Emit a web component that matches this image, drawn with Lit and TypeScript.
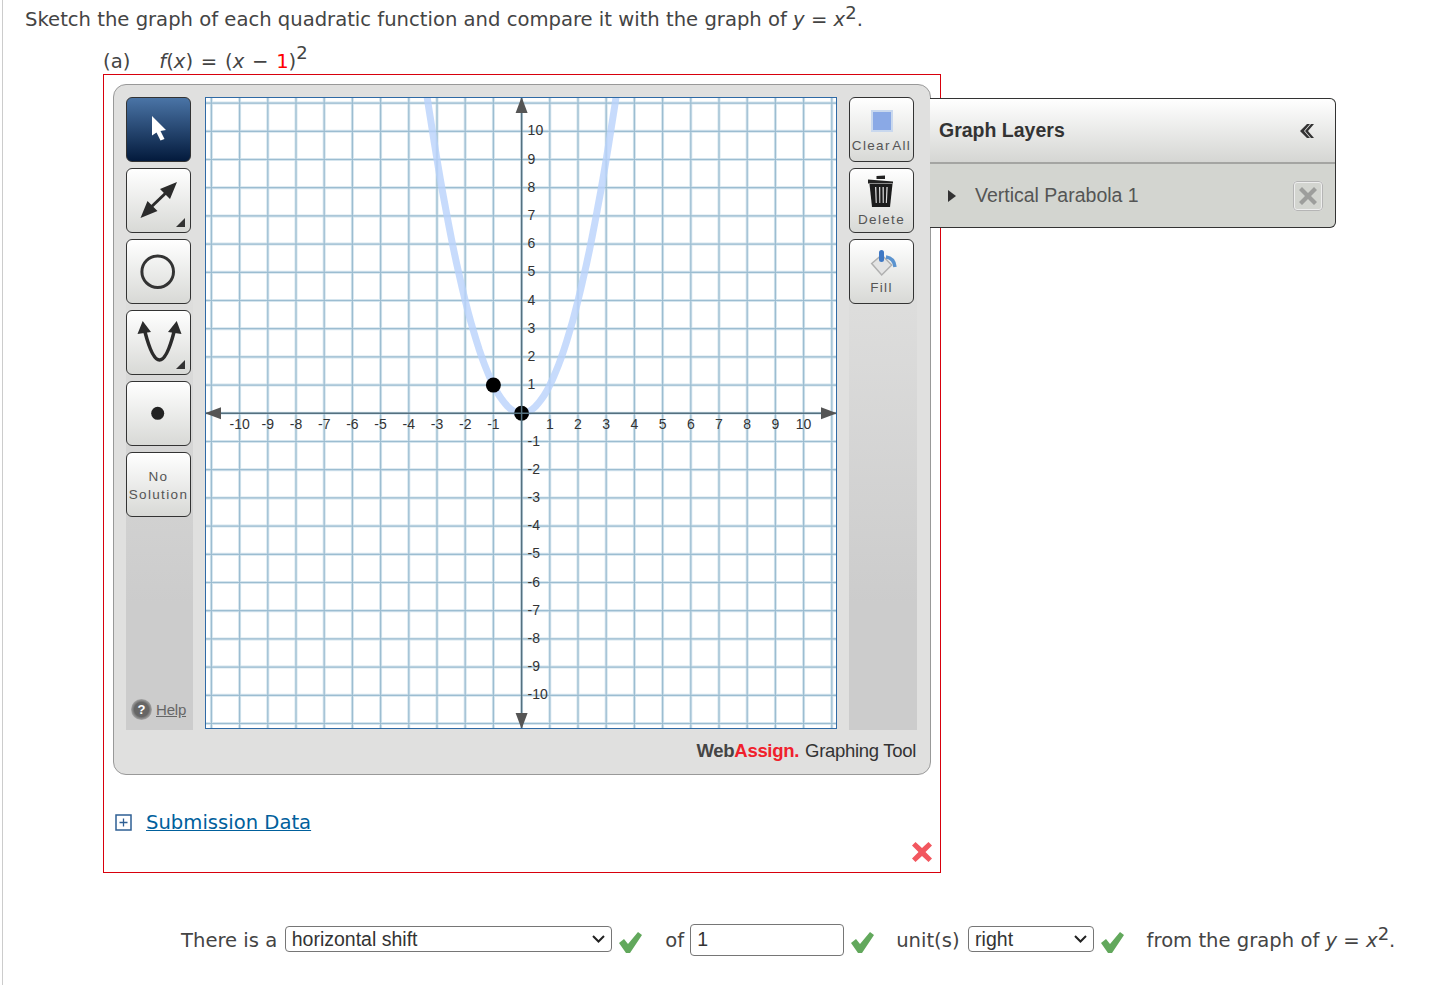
import { LitElement, css, html, svg } from "lit";
import { customElement } from "lit/decorators.js";

// graph coords: origin inside the 632 canvas, one unit is 28.2px
const UNIT = 28.2;
const CX = 316.6;
const CY = 316.3;
const TICKS = [-11, -10, -9, -8, -7, -6, -5, -4, -3, -2, -1, 0, 1, 2, 3, 4, 5, 6, 7, 8, 9, 10, 11];
const LABELS = TICKS.filter((t) => t !== 0 && Math.abs(t) <= 10);
const px = (t: number) => CX + t * UNIT;
const py = (t: number) => CY - t * UNIT;

const arrowMark = svg`<path d="M59 50v9h-9z" fill="#333" />`;

function parabolaPath() {
  const pts: string[] = [];
  for (let x = -3.6; x <= 3.6; x += 0.1) {
    pts.push(`${px(x).toFixed(1)},${py(x * x).toFixed(1)}`);
  }
  return pts.join(" ");
}

const TOOLS = [
  {
    active: true,
    icon: svg`<path d="M26 19 40 33 34.500 34 38.500 42 34.500 43.500 30.500 35.500 26 38.500z" fill="#fff" />`,
  },
  {
    icon: svg`<path d="M21 43 45 20" stroke="#2b2b2b" stroke-width="3" />
      <path d="M51 14 34 21 44 31zM14.500 50 31.500 43 21.500 33z" fill="#2b2b2b" />${arrowMark}`,
  },
  { icon: svg`<circle cx="31.700" cy="32.700" r="15.800" fill="none" stroke="#333" stroke-width="3" />` },
  {
    icon: svg`<path d="M19 22Q33.500 78 48 22" fill="none" stroke="#2b2b2b" stroke-width="3.500" />
      <path d="M16.700 11 11.500 24 25 22zM50.700 11 55.500 24 42 22z" fill="#2b2b2b" />${arrowMark}`,
  },
  { icon: svg`<circle cx="31.700" cy="32.300" r="6.500" fill="#222" />` },
];

@customElement("app-root")
export class AppRoot extends LitElement {
  static styles = css`
    :host {
      display: block;
      font-family: "DejaVu Sans", sans-serif;
      font-size: 19.600px;
      color: #444;
    }
    .page {
      margin-left: 2px;
      border-left: 1px solid #ccc;
      padding-left: 22px;
      height: 985px;
      box-sizing: border-box;
      overflow: hidden;
    }
    i {
      font-style: italic;
    }
    sup {
      font-size: 18px;
      line-height: 0;
      vertical-align: 7px;
    }
    .intro {
      height: 43px;
      line-height: 39px;
      white-space: nowrap;
    }
    .part {
      height: 31px;
      line-height: 38px;
      margin-left: 78px;
      display: flex;
      gap: 29px;
    }
    .formula {
      word-spacing: 1.500px;
    }
    .formula sup {
      vertical-align: 9px;
    }
    .red {
      color: #f00;
    }
    .question {
      position: relative;
      margin-left: 78px;
      width: 838px;
      height: 799px;
      box-sizing: border-box;
      border: 1px solid #d8000c;
      padding: 9px;
      display: flex;
      flex-direction: column;
    }
    .tool {
      position: relative;
      width: 818px;
      height: 691px;
      box-sizing: border-box;
      border: 1px solid #999;
      border-radius: 13px;
      background: #e0e0df;
      padding: 12px 13px 0 12px;
      flex: none;
    }
    .columns {
      display: flex;
      gap: 12px;
      height: 633px;
    }
    .bar {
      width: 67px;
      flex: none;
      display: flex;
      flex-direction: column;
      gap: 6px;
      background: linear-gradient(#e0e0df 25%, #cccccc 80%);
    }
    .bar.right {
      width: 68px;
    }
    .btn {
      width: 65px;
      height: 65px;
      box-sizing: border-box;
      border: 1px solid #333;
      border-radius: 6px;
      background: linear-gradient(#ffffff, #d8d9d6);
      display: flex;
      flex-direction: column;
      align-items: center;
      flex: none;
      position: relative;
      font-family: "Liberation Sans", sans-serif;
      font-size: 13.500px;
      letter-spacing: 1.350px;
      word-spacing: -3px;
      color: #555;
    }
    .btn.on {
      background: linear-gradient(#4a74a6, #031a3c);
    }
    .btn svg {
      position: absolute;
      left: -1px;
      top: -1px;
    }
    .btn .cap {
      position: absolute;
      left: 0;
      right: 0;
      text-align: center;
      white-space: nowrap;
    }
    .nosol {
      justify-content: center;
      line-height: 18px;
      text-align: center;
      padding-top: 2px;
    }
    .help {
      margin-top: auto;
      margin-bottom: 10px;
      padding-left: 5px;
      display: flex;
      align-items: center;
      gap: 4px;
      font-family: "Liberation Sans", sans-serif;
      font-size: 15px;
      color: #666;
    }
    .help u {
      letter-spacing: -0.200px;
    }
    .qmark {
      width: 21px;
      height: 21px;
      border-radius: 50%;
      background: radial-gradient(circle, #666 48%, #bbb 78%, #888 100%);
      color: #fff;
      font-weight: bold;
      font-size: 13px;
      line-height: 21px;
      text-align: center;
    }
    .canvas {
      width: 632px;
      height: 632px;
      flex: none;
      background: #fff;
      display: block;
    }
    .canvas text {
      font-family: "Liberation Sans", sans-serif;
      font-size: 14px;
      fill: #333;
    }
    .brand {
      height: 42px;
      display: flex;
      align-items: center;
      justify-content: flex-end;
      font-family: "Liberation Sans", sans-serif;
      font-size: 18.500px;
      color: #333;
      white-space: nowrap;
      padding-right: 1px;
      letter-spacing: -0.300px;
    }
    .brand b {
      color: #444;
    }
    .brand b span {
      color: #f0202c;
    }
    .brand em {
      font-style: normal;
      margin-left: 6px;
    }
    .layers {
      position: absolute;
      left: 100%;
      top: 13px;
      width: 406px;
      height: 130px;
      box-sizing: border-box;
      border: 1px solid #333;
      border-left: none;
      border-radius: 0 6px 6px 0;
      background: #d3d5d0;
      font-family: "Liberation Sans", sans-serif;
      display: flex;
      flex-direction: column;
    }
    .layers header {
      height: 65px;
      flex: none;
      box-sizing: border-box;
      border-bottom: 2px solid #a4a5a2;
      border-radius: 0 6px 0 0;
      background: linear-gradient(#ffffff, #d5d6d3);
      display: flex;
      align-items: center;
      justify-content: space-between;
      padding: 0 21px 0 9px;
      font-size: 19.500px;
      font-weight: bold;
      color: #333;
    }
    .layer {
      flex: 1;
      display: flex;
      align-items: center;
      padding: 0 12px 0 18px;
      color: #555;
      font-size: 19.500px;
    }
    .layer span {
      margin-left: 19px;
      flex: 1;
    }
    .close {
      width: 30px;
      height: 30px;
      box-sizing: border-box;
      border: 2px solid #eee;
      outline: 1px solid #b5b5b5;
      outline-offset: -1px;
      border-radius: 4px;
      display: flex;
      align-items: center;
      justify-content: center;
    }
    .submission {
      margin: 33px 0 0 2px;
      display: flex;
      align-items: center;
      gap: 14px;
      height: 28px;
    }
    .submission a {
      color: #00609c;
      text-decoration: underline;
    }
    .wrong {
      align-self: flex-end;
      margin: 6px -1px 0 0;
    }
    .answer {
      margin: 51px 0 0 156px;
      display: flex;
      align-items: center;
      height: 32px;
      white-space: nowrap;
    }
    select {
      appearance: none;
      height: 26px;
      box-sizing: border-box;
      border: 1px solid #767676;
      border-radius: 4px;
      background: #fff
        url("data:image/svg+xml,%3Csvg xmlns='http://www.w3.org/2000/svg' width='13' height='8'%3E%3Cpath d='M1 1l5.500 5.500L12 1' fill='none' stroke='%23222' stroke-width='2'/%3E%3C/svg%3E")
        no-repeat right 6px center;
      font-family: "Liberation Sans", sans-serif;
      font-size: 19.500px;
      color: #333;
      padding: 0 0 0 6px;
      margin: 0 0 2px 0;
    }
    input {
      width: 154px;
      height: 32px;
      box-sizing: border-box;
      border: 1px solid #767676;
      border-radius: 4px;
      font-family: "Liberation Sans", sans-serif;
      font-size: 19.500px;
      color: #333;
      padding: 0 6px 2px;
      margin: 0;
    }
    .shift {
      width: 327px;
      margin-left: 7.500px;
    }
    .dir {
      width: 126px;
      margin-left: 8.500px;
    }
    .check {
      flex: none;
      margin: 4px 0 0 7px;
    }
    .of {
      margin: 0 6px 0 23.500px;
    }
    .units {
      margin-left: 22px;
    }
    .tail {
      margin-left: 22.500px;
    }
  `;

  private check() {
    return html`<svg class="check" width="23" height="21" viewBox="0 0 23 21">
      <path d="M0 11 5 7 9 12 19 0 23 3 11 21 7 21z" fill="#62a85c" />
    </svg>`;
  }

  private graph() {
    return html`<svg class="canvas" viewBox="0 0 632 632">
      <rect x="0.500" y="0.500" width="631" height="631" fill="#fff" />
      ${TICKS.map(
        (t) => svg`
          <line x1=${px(t)} x2=${px(t)} y1="1" y2="631" stroke="#d5e5ee" stroke-width="3" />
          <line x1="1" x2="631" y1=${py(t)} y2=${py(t)} stroke="#d5e5ee" stroke-width="3" />`,
      )}
      ${TICKS.map(
        (t) => svg`
          <line x1=${px(t)} x2=${px(t)} y1="1" y2="631" stroke="#9cbdd1" stroke-width="1.200" />
          <line x1="1" x2="631" y1=${py(t)} y2=${py(t)} stroke="#9cbdd1" stroke-width="1.200" />`,
      )}
      <polyline points=${parabolaPath()} fill="none" stroke="#b9d2fb" stroke-opacity="0.800" stroke-width="7" />
      <circle cx=${px(-1)} cy=${py(1)} r="7.500" fill="#000" />
      <circle cx=${px(0)} cy=${py(0)} r="7.500" fill="#000" />
      <line x1="1" x2="631" y1=${CY} y2=${CY} stroke="#54707f" stroke-width="1.500" />
      <line x1=${CX} x2=${CX} y1="1" y2="631" stroke="#54707f" stroke-width="1.500" />
      <path d="M0 316.300 16 310.300V322.300zM632 316.300 616 310.300V322.300zM316.600 0 310.600 16H322.600zM316.600 632 310.600 616H322.600z" fill="#555" />
      ${LABELS.map(
        (t) => svg`<text x=${px(t)} y="332" text-anchor="middle">${t}</text>`,
      )}
      ${LABELS.map(
        (t) => svg`<text x=${CX + 6} y=${py(t) + 4}>${t}</text>`,
      )}
      <rect x="0.500" y="0.500" width="631" height="631" fill="none" stroke="#2f6aa5" />
    </svg>`;
  }

  private layers() {
    return html`<div class="layers">
      <header>
        Graph Layers
        <svg width="14" height="14" viewBox="0 0 14 14">
          <path d="M7 0 0 7 7 14H10L4 7 10 0zM11 0 5 7 11 14H14L8 7 14 0z" fill="#333" />
        </svg>
      </header>
      <div class="layer">
        <svg width="8" height="12" viewBox="0 0 8 12"><path d="M0 0 8 6 0 12z" fill="#333" /></svg>
        <span>Vertical Parabola 1</span>
        <div class="close">
          <svg width="20" height="20" viewBox="0 0 20 20">
            <path d="M4 1 10 7 16 1 19 4 13 10 19 16 16 19 10 13 4 19 1 16 7 10 1 4z" fill="#9d9e9c" />
          </svg>
        </div>
      </div>
    </div>`;
  }

  render() {
    return html`<div class="page">
      <div class="intro">
        Sketch the graph of each quadratic function and compare it with the graph of <i>y</i> = <i>x</i><sup>2</sup>.
      </div>
      <div class="part">
        <span>(a)</span>
        <span class="formula"><i>f</i>(<i>x</i>) = (<i>x</i> − <span class="red">1</span>)<sup>2</sup></span>
      </div>
      <div class="question">
        <div class="tool">
          <div class="columns">
            <div class="bar">
              ${TOOLS.map(
                (t) => html`<div class="btn ${t.active ? "on" : ""}">
                  <svg width="65" height="65" viewBox="0 0 65 65">${t.icon}</svg>
                </div>`,
              )}
              <div class="btn nosol">No<br />Solution</div>
              <div class="help"><span class="qmark">?</span><u>Help</u></div>
            </div>
            ${this.graph()}
            <div class="bar right">
              <div class="btn">
                <svg width="65" height="65" viewBox="0 0 65 65">
                  <rect x="23" y="14" width="20" height="20" fill="#8aa9e6" stroke="#c9d8ee" stroke-width="2" />
                </svg>
                <span class="cap" style="top:40px">Clear All</span>
              </div>
              <div class="btn">
                <svg width="65" height="65" viewBox="0 0 65 65">
                  <path d="M19 11.500 44 13.500V15.500H19zM27.500 11V8L36 7.500V11z" fill="#222" />
                  <path d="M20.500 16H43.500L41 39H23z" fill="#1c1c1c" />
                  <path d="M26 19H27.300L27.800 35H26.700zM30 19H31.300V35H30.300zM33.500 19H34.800V35H33.700zM37.400 19H38.700L37.900 35H36.800z" fill="#ddd" />
                </svg>
                <span class="cap" style="top:43px">Delete</span>
              </div>
              <div class="btn">
                <svg width="65" height="65" viewBox="0 0 65 65">
                  <path d="M22.700 24.500 32.700 16 42.700 26 32.700 36z" fill="#e4e4e4" stroke="#b0b0b0" stroke-width="1.500" />
                  <rect x="30" y="11" width="5" height="12" rx="2.500" fill="#3f78c4" />
                  <path d="M37 18Q45 19 46 28" fill="none" stroke="#5b93cf" stroke-width="3.500" />
                </svg>
                <span class="cap" style="top:40px">Fill</span>
              </div>
            </div>
          </div>
          <div class="brand">
            <b>Web<span>Assign.</span></b><em>Graphing Tool</em>
          </div>
          ${this.layers()}
        </div>
        <div class="submission">
          <svg width="17" height="17" viewBox="0 0 17 17">
            <rect x="1" y="1" width="15" height="15" fill="#fff" stroke="#2e5f94" stroke-width="1.500" />
            <path d="M4.500 8.500H12.500M8.500 4.500V12.500" stroke="#2e5f94" stroke-width="1.300" />
          </svg>
          <a href="#">Submission Data</a>
        </div>
        <svg class="wrong" width="20" height="20" viewBox="0 0 20 20">
          <path d="M3.500 0 10 6 16.500 0 20 3.500 13.500 10 20 16.500 16.500 20 10 14 3.500 20 0 16.500 6.500 10 0 3.500z" fill="#f2575f" />
        </svg>
      </div>
      <div class="answer">
        <span>There is a</span>
        <select class="shift"><option>horizontal shift</option></select>
        ${this.check()}
        <span class="of">of</span>
        <input value="1" />
        ${this.check()}
        <span class="units">unit(s)</span>
        <select class="dir"><option>right</option></select>
        ${this.check()}
        <span class="tail">from the graph of <i>y</i> = <i>x</i><sup>2</sup>.</span>
      </div>
    </div>`;
  }
}
